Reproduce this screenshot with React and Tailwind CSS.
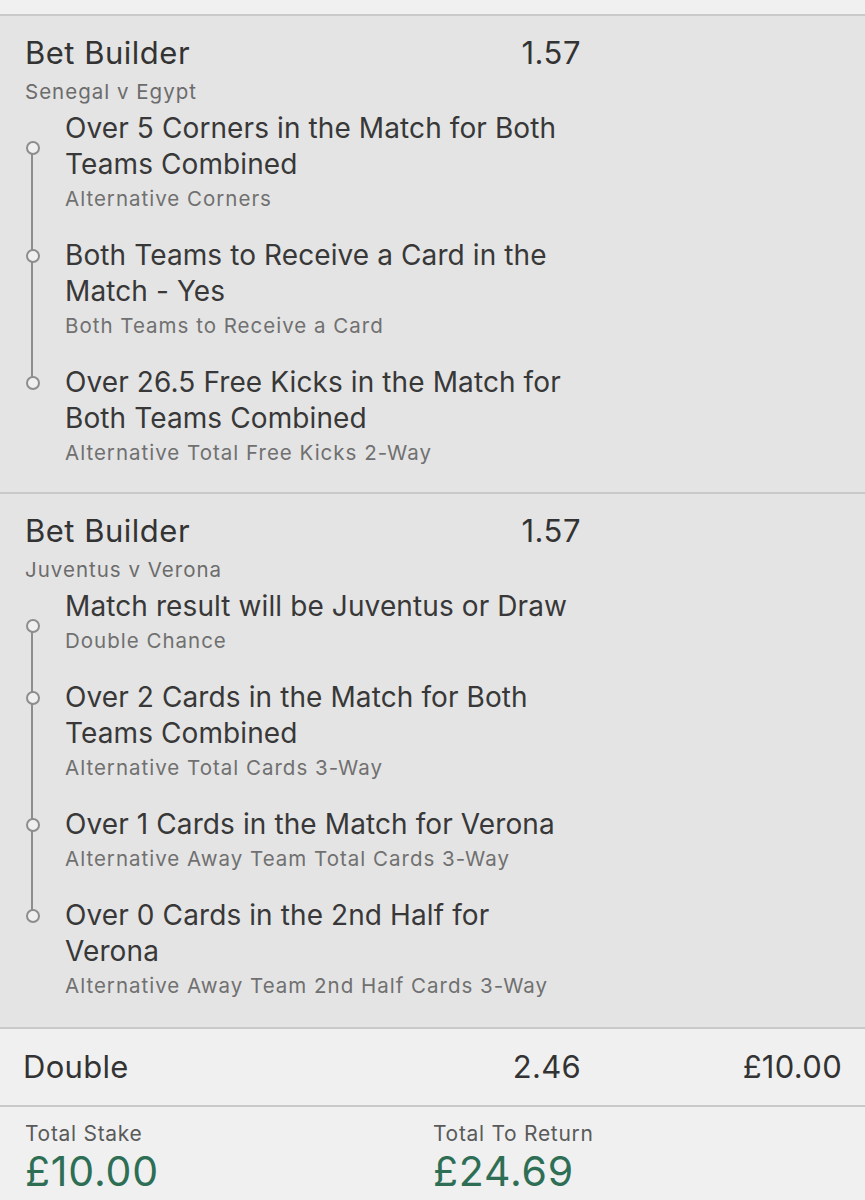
import React from "react";

const font = { fontFamily: "Inter, 'Noto Sans', sans-serif" };

const cards = [
  {
    match: "Senegal v Egypt",
    odds: "1.57",
    legs: [
      { title: ["Over 5 Corners in the Match for Both", "Teams Combined"], market: "Alternative Corners" },
      { title: ["Both Teams to Receive a Card in the", "Match - Yes"], market: "Both Teams to Receive a Card" },
      { title: ["Over 26.5 Free Kicks in the Match for", "Both Teams Combined"], market: "Alternative Total Free Kicks 2-Way" },
    ],
  },
  {
    match: "Juventus v Verona",
    odds: "1.57",
    legs: [
      { title: ["Match result will be Juventus or Draw"], market: "Double Chance" },
      { title: ["Over 2 Cards in the Match for Both", "Teams Combined"], market: "Alternative Total Cards 3-Way" },
      { title: ["Over 1 Cards in the Match for Verona"], market: "Alternative Away Team Total Cards 3-Way" },
      { title: ["Over 0 Cards in the 2nd Half for", "Verona"], market: "Alternative Away Team 2nd Half Cards 3-Way" },
    ],
  },
];

const Leg = ({ leg, first, last }) => {
  // first leg's dot sits between its title and market line
  const dotTop = first ? "top-[31px]" : "top-[12px]";
  const lineTop = first ? "top-[37px]" : "top-[18px]";
  return (
    <div className="relative pl-[65px]">
      {!last && (
        <div className={`absolute left-[31px] w-[2px] bottom-[-43px] bg-[#8d8d8d] ${lineTop}`}></div>
      )}
      <div
        className={`absolute left-[25.5px] w-[14px] h-[14px] rounded-full border-2 border-[#8d8d8d] bg-[#efefef] ${dotTop}`}
      ></div>
      <div className="text-[28px] leading-[36px] text-[#383838] tracking-[0.1px]">
        {leg.title.map((t, i) => (
          <div key={i}>{t}</div>
        ))}
      </div>
      <div className="mt-[4px] text-[20.5px] leading-[26px] text-[#707070] tracking-[1px]">{leg.market}</div>
    </div>
  );
};

const Card = ({ card, tall }) => (
  <div className={`bg-[#e4e4e4] border-b-2 border-[#c9c9c9] pt-[18px] ${tall ? "pb-[28px]" : "pb-[26px]"}`}>
    <div className="flex justify-between w-[581px] pl-[25px] text-[31px] leading-[38px] text-[#333] tracking-[0.5px]">
      <span>Bet Builder</span>
      <span>{card.odds}</span>
    </div>
    <div className="mt-[7px] pl-[25px] text-[20.5px] leading-[26px] text-[#6c6c6c] tracking-[1px]">{card.match}</div>
    <div className="mt-[5px] flex flex-col gap-[25px]">
      {card.legs.map((leg, i) => (
        <Leg key={i} leg={leg} first={i === 0} last={i === card.legs.length - 1} />
      ))}
    </div>
  </div>
);

export default function App() {
  return (
    <div className="w-[865px] h-[1200px] overflow-hidden bg-[#f0f0f0]" style={font}>
      <div className="h-[16px] bg-[#f0f0f0] border-b-2 border-[#c9c9c9]"></div>
      {cards.map((c, i) => (
        <Card key={i} card={c} tall={i === cards.length - 1} />
      ))}
      <div className="h-[78px] flex items-center border-b-2 border-[#c9c9c9] bg-[#f0f0f0] text-[31px] text-[#333] tracking-[0.3px] pl-[23px] pr-[23px]">
        <div className="w-[558px] flex justify-between">
          <span>Double</span>
          <span>2.46</span>
        </div>
        <span className="flex-1 text-right">£10.00</span>
      </div>
      <div className="flex pt-[15px] pl-[25px]">
        <div className="w-[408px]">
          <div className="text-[21px] leading-[24px] text-[#5a5a5a] tracking-[0.7px]">Total Stake</div>
          <div className="text-[41px] leading-[50px] text-[#2e6e55] tracking-[0.8px]">£10.00</div>
        </div>
        <div>
          <div className="text-[21px] leading-[24px] text-[#5a5a5a] tracking-[0.7px]">Total To Return</div>
          <div className="text-[41px] leading-[50px] text-[#2e6e55] tracking-[0.8px]">£24.69</div>
        </div>
      </div>
    </div>
  );
}
